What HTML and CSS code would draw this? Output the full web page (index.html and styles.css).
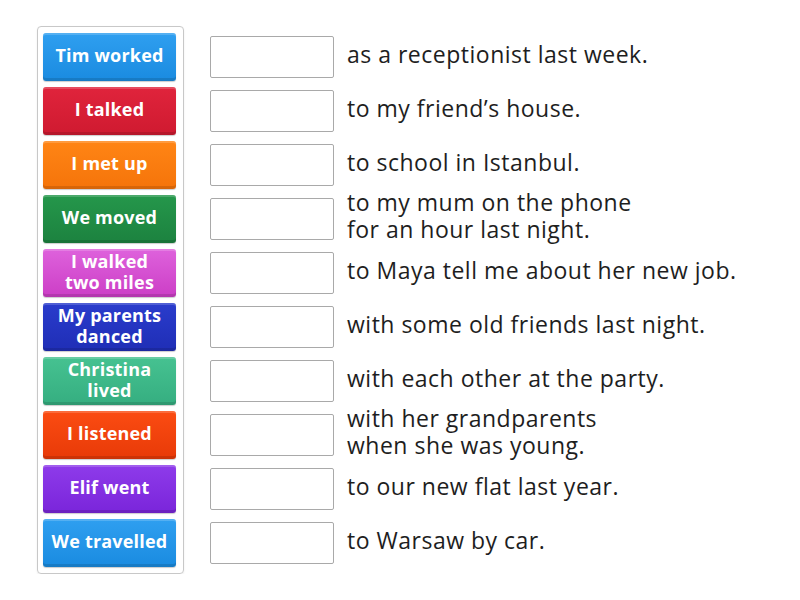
FILE: index.html
```html
<!DOCTYPE html>
<html>
<head>
<meta charset="utf-8">
<link rel="stylesheet" href="styles.css">
</head>
<body>
<div class="page">
  <div class="card">
    <div class="tile c-blue">Tim worked</div>
    <div class="tile c-red">I talked</div>
    <div class="tile c-orange">I met up</div>
    <div class="tile c-green">We moved</div>
    <div class="tile c-pink">I walked<br>two miles</div>
    <div class="tile c-navy">My parents<br>danced</div>
    <div class="tile c-teal">Christina<br>lived</div>
    <div class="tile c-vermilion">I listened</div>
    <div class="tile c-purple">Elif went</div>
    <div class="tile c-blue">We travelled</div>
  </div>
  <div class="rows">
    <div class="row"><div class="slot"></div><div class="phrase">as a receptionist last week.</div></div>
    <div class="row"><div class="slot"></div><div class="phrase">to my friend’s house.</div></div>
    <div class="row"><div class="slot"></div><div class="phrase">to school in Istanbul.</div></div>
    <div class="row"><div class="slot"></div><div class="phrase">to my mum on the phone<br>for an hour last night.</div></div>
    <div class="row"><div class="slot"></div><div class="phrase">to Maya tell me about her new job.</div></div>
    <div class="row"><div class="slot"></div><div class="phrase">with some old friends last night.</div></div>
    <div class="row"><div class="slot"></div><div class="phrase">with each other at the party.</div></div>
    <div class="row"><div class="slot"></div><div class="phrase">with her grandparents<br>when she was young.</div></div>
    <div class="row"><div class="slot"></div><div class="phrase">to our new flat last year.</div></div>
    <div class="row"><div class="slot"></div><div class="phrase">to Warsaw by car.</div></div>
  </div>
</div>
</body>
</html>
```

FILE: styles.css
```css
html, body {
  margin: 0;
  padding: 0;
  background: #ffffff;
}

.page {
  display: flex;
  align-items: flex-start;
  padding: 26px 0 0 37px;
  font-family: "Open Sans", "Liberation Sans", sans-serif;
}

.card {
  display: flex;
  flex-direction: column;
  gap: 6px;
  width: 134px;
  padding: 6px 6px 6px 5px;
  border: 1px solid #c8c8c8;
  border-radius: 4px;
  box-shadow: 0 1px 2px rgba(0,0,0,0.08);
}

.tile {
  box-sizing: border-box;
  height: 48px;
  width: 133px;
  padding-bottom: 3px;
  display: flex;
  align-items: center;
  justify-content: center;
  text-align: center;
  color: #ffffff;
  font-weight: 700;
  font-size: 18px;
  letter-spacing: 0.2px;
  line-height: 21px;
  border-radius: 3px;
  box-shadow: inset 0 2px 0 rgba(255,255,255,0.18), inset 0 -3px 0 rgba(0,0,0,0.12), 0 1px 1px rgba(0,0,0,0.2);
}

.c-blue { background: linear-gradient(#2f9ff0, #1a8be0); }
.c-red { background: linear-gradient(#e0243c, #cf1a30); }
.c-orange { background: linear-gradient(#ff8515, #f5740a); }
.c-green { background: linear-gradient(#25974b, #1c823f); }
.c-pink { background: linear-gradient(#de62dc, #cc3ec6); }
.c-navy { background: linear-gradient(#2a3ccc, #1f2eb6); }
.c-teal { background: linear-gradient(#46c291, #35ae80); }
.c-vermilion { background: linear-gradient(#fb4c12, #e83a08); }
.c-purple { background: linear-gradient(#8e3bea, #7a25da); }

.rows {
  display: flex;
  flex-direction: column;
  gap: 6px;
  padding-top: 7px;
  margin-left: 26px;
}

.row {
  height: 48px;
  display: flex;
  align-items: center;
}

.slot {
  box-sizing: border-box;
  width: 124px;
  height: 42px;
  border: 1px solid #a9a9a9;
  border-radius: 2px;
  background: #ffffff;
  flex: none;
}

.phrase {
  margin-left: 13px;
  padding-bottom: 6px;
  font-size: 23px;
  letter-spacing: 0.5px;
  line-height: 27px;
  color: #1e1e1e;
  white-space: nowrap;
}
```
